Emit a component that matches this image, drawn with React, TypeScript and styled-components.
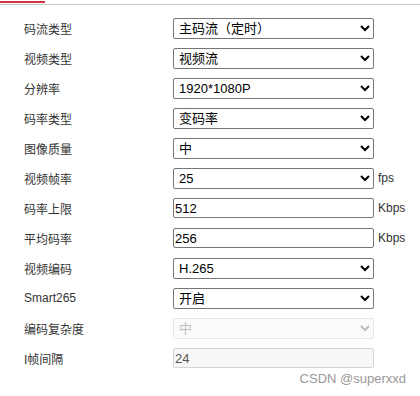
import React from "react";
import styled, { createGlobalStyle } from "styled-components";

interface FieldItem {
  label: string;
  kind: "select" | "input";
  value: string;
  options?: string[];
  unit?: string;
  disabled?: boolean;
}

const fields: FieldItem[] = [
  { label: "码流类型", kind: "select", value: "主码流（定时）", options: ["主码流（定时）", "子码流"] },
  { label: "视频类型", kind: "select", value: "视频流", options: ["视频流", "复合流"] },
  { label: "分辨率", kind: "select", value: "1920*1080P", options: ["1920*1080P", "1280*720P"] },
  { label: "码率类型", kind: "select", value: "变码率", options: ["变码率", "定码率"] },
  { label: "图像质量", kind: "select", value: "中", options: ["最高", "较高", "中", "低"] },
  { label: "视频帧率", kind: "select", value: "25", options: ["25", "20", "15"], unit: "fps" },
  { label: "码率上限", kind: "input", value: "512", unit: "Kbps" },
  { label: "平均码率", kind: "input", value: "256", unit: "Kbps" },
  { label: "视频编码", kind: "select", value: "H.265", options: ["H.264", "H.265"] },
  { label: "Smart265", kind: "select", value: "开启", options: ["开启", "关闭"] },
  { label: "编码复杂度", kind: "select", value: "中", options: ["低", "中", "高"], disabled: true },
  { label: "I帧间隔", kind: "input", value: "24", disabled: true },
];

const GlobalStyle = createGlobalStyle`
  html, body {
    margin: 0;
    padding: 0;
    background: #fff;
  }
  body {
    font-family: Arial, "Liberation Sans", "Noto Sans CJK SC", sans-serif;
    font-size: 12px;
    color: #333;
  }
`;

const Page = styled.div`
  position: relative;
  width: 420px;
  height: 396px;
  overflow: hidden;
`;

const TabBar = styled.div`
  height: 3px;
  border-bottom: 1px solid #c8c8c8;
`;

const ActiveTab = styled.div`
  width: 45px;
  height: 2px;
  margin-top: 1px;
  background: #d0343c;
`;

const Form = styled.div`
  display: flex;
  flex-direction: column;
  padding: 8px 0 0 24px;
`;

const Row = styled.div`
  display: grid;
  grid-template-columns: 149px 201px auto;
  align-items: center;
  height: 30px;
`;

const Label = styled.span`
  font-size: 12px;
  color: #333;
  white-space: nowrap;
`;

const Select = styled.select`
  width: 201px;
  height: 21px;
  box-sizing: border-box;
  margin: 0;
  padding: 0 0 0 1px;
  border: 1px solid ${(p) => (p.disabled ? "#dcdcdc" : "#767676")};
  border-radius: 2px;
  background: ${(p) => (p.disabled ? "#fafafa" : "#fff")};
  color: ${(p) => (p.disabled ? "#a0a0a0" : "#000")};
  font-family: Arial, "Liberation Sans", "Noto Sans CJK SC", sans-serif;
  font-size: 13px;
  outline: none;
`;

const Input = styled.input`
  width: 201px;
  height: 20px;
  box-sizing: border-box;
  margin: 0;
  padding: 0 1px;
  border: 1px solid ${(p) => (p.disabled ? "#d4d4d4" : "#767676")};
  border-radius: 2px;
  background: ${(p) => (p.disabled ? "#f7f7f7" : "#fff")};
  color: ${(p) => (p.disabled ? "#555" : "#000")};
  font-family: Arial, "Liberation Sans", "Noto Sans CJK SC", sans-serif;
  font-size: 13px;
  outline: none;
`;

const Unit = styled.span`
  margin-left: 4px;
  font-size: 12px;
  color: #333;
`;

const Watermark = styled.div`
  position: absolute;
  right: 14px;
  bottom: 10px;
  font-family: Arial, "Liberation Sans", sans-serif;
  font-size: 13px;
  color: #999;
`;

export default function App() {
  return (
    <Page>
      <GlobalStyle />
      <TabBar>
        <ActiveTab />
      </TabBar>
      <Form>
        {fields.map((f) => (
          <Row key={f.label}>
            <Label>{f.label}</Label>
            {f.kind === "select" ? (
              <Select defaultValue={f.value} disabled={f.disabled}>
                {f.options?.map((o) => (
                  <option key={o} value={o}>
                    {o}
                  </option>
                ))}
              </Select>
            ) : (
              <Input defaultValue={f.value} disabled={f.disabled} />
            )}
            {f.unit ? <Unit>{f.unit}</Unit> : <span />}
          </Row>
        ))}
      </Form>
      <Watermark>CSDN @superxxd</Watermark>
    </Page>
  );
}
